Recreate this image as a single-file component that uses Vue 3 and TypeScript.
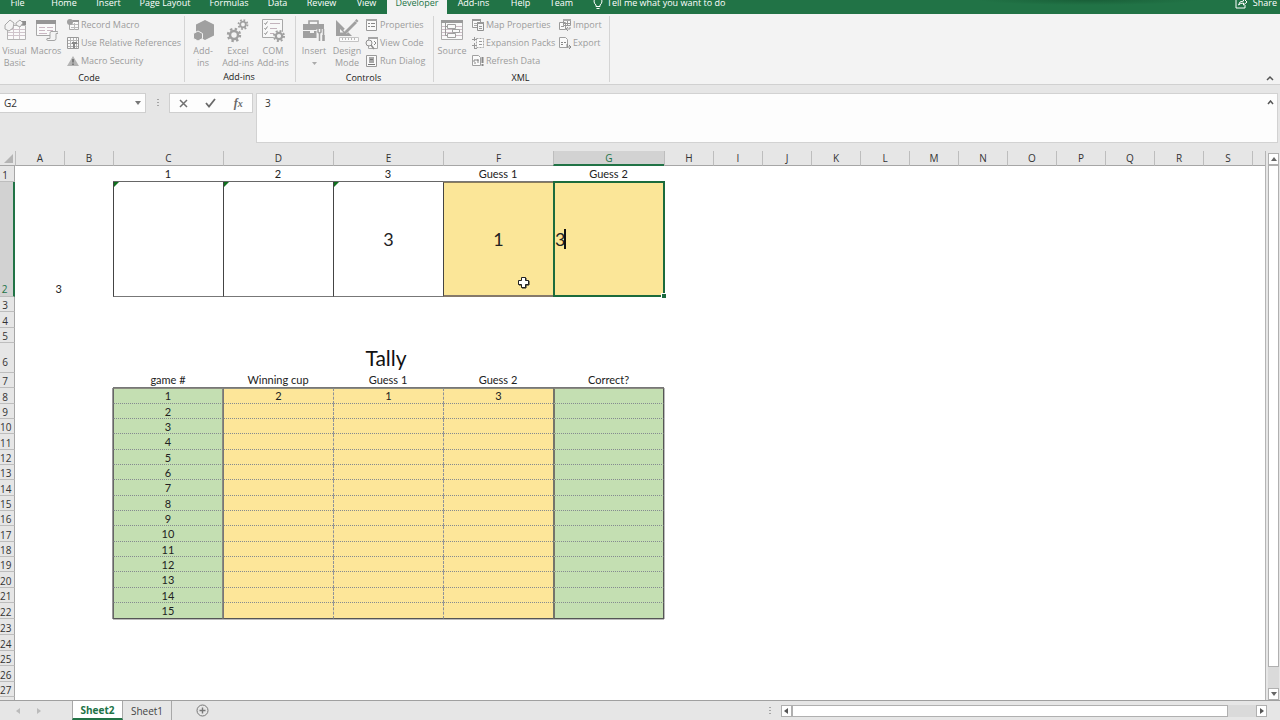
<script setup lang="ts">
import { ref } from 'vue'

interface Command { label: string; icon: string; menu?: boolean }
interface Group { name: string; cls: string; large: Command[]; small: Command[][] }

const tabs = ['File', 'Home', 'Insert', 'Page Layout', 'Formulas', 'Data', 'Review', 'View', 'Developer', 'Add-ins', 'Help', 'Team']

const icons: Record<string, string> = {
  vb: '<path d="M4.500 6.500h18v14h-18z" fill="#fafafa" stroke="#b4b4b4"/><path d="M18 2h5v4h-5z" fill="#8e8e8e"/><path d="M5 10.500h17M5 13.500h17M5 16.500h17M10.500 8v12M16.500 8v12" stroke="#cfc4cb" fill="none"/><path d="M2 6l5-5 4 3-1 5-4 3-4-2z M13 4l4-3 3 3-3 4-4-2z" fill="#f3f3f3" stroke="#a8a8a8"/>',
  macros: '<path d="M2.500 1.500h19v15h-19z" fill="#fafafa" stroke="#a8a8a8"/><path d="M2 1h20v4H2z" fill="#969696"/><path d="M5 8.500h6M13 8.500h6M5 11.500h6M13 11.500h6M5 14.500h8" stroke="#c9b7c2" fill="none"/><path d="M17 12.500h6q2 0 1 2h-2v5q0 2-2 2h-6q-2 0-1-2h3v-5q0-2 1-2z" fill="#f3f3f3" stroke="#a5a5a5"/>',
  hex: '<path d="M14 1l9 4.500v11L14 21l-9-4.500v-11z" fill="#a0a0a0"/><path d="M7 12l4.500 2.500v5L7 22l-4.500-2.500v-5z" fill="#a0a0a0" stroke="#f3f3f3"/>',
  gears: '<g fill="none" stroke="#a0a0a0"><circle cx="8" cy="16" r="4" stroke-width="2.500"/><circle cx="8" cy="16" r="6" stroke-width="2.400" stroke-dasharray="2.350 2.360"/><circle cx="17" cy="5.500" r="2.800" stroke-width="1.800"/><circle cx="17" cy="5.500" r="4.500" stroke-width="1.800" stroke-dasharray="1.760 1.770"/></g>',
  com: '<path d="M1.500 .500h20v18h-20z" fill="#f8f8f8" stroke="#a8a8a8"/><path d="M3.500 4l1 1.500 2-3M3.500 9l1 1.500 2-3M3.500 14l1 1.500 2-3" fill="none" stroke="#909090"/><path d="M9 4.500h10M9 9.500h7M9 14.500h4" stroke="#c3b3bc"/><circle cx="18" cy="17" r="5.500" fill="#f3f3f3"/><circle cx="18" cy="17" r="3.200" fill="#f3f3f3" stroke="#a0a0a0" stroke-width="2.200"/><circle cx="18" cy="17" r="5" fill="none" stroke="#a0a0a0" stroke-width="2" stroke-dasharray="1.960 1.970"/>',
  toolbox: '<path d="M1 5h21v6H1zM1 12h7v2h4v-2h4v7H1z" fill="#a0a0a0"/><path d="M7 5V2h9v3" fill="none" stroke="#a0a0a0" stroke-width="1.600"/><path d="M14.500 10h9v13h-9z" fill="#f3f3f3"/><path d="M17.500 14v8M16 10v3q1.500 2 3 0v-3M21.500 10v6" fill="none" stroke="#a0a0a0" stroke-width="1.500"/><path d="M21.500 16v6" stroke="#a0a0a0" stroke-width="2.600"/>',
  design: '<path d="M1 1v16h16z" fill="#a0a0a0"/><path d="M5 10v3.500h3.500z" fill="#f3f3f3"/><path d="M22 1L10 13" stroke="#f3f3f3" stroke-width="5"/><path d="M21 3L11 13" stroke="#a0a0a0" stroke-width="2.800"/><path d="M21.500 0l2 2-1.500 1.500-2-2zM9 15l1-3.500 2.500 2.500z" fill="#a0a0a0"/><path d="M4.500 18.500h19v4h-19z" fill="#fafafa" stroke="#c4c4c4"/><path d="M7.500 19v2M10.500 19v2M13.500 19v2M16.500 19v2M19.500 19v2" stroke="#bbb"/>',
  source: '<path d="M1.500 1.500h21v19h-21z" fill="#f9f9f9" stroke="#aaa"/><path d="M1 1h22v3H1z" fill="#9a9a9a"/><path d="M2 7.500h20M2 10.500h20M2 13.500h20M2 16.500h20" stroke="#ccbdc6"/><path d="M5.500 4v12.500H9M5.500 7.500H9M12.500 10v2h2" fill="none" stroke="#999"/><path d="M7.500 5.500h8v4h-8zM7.500 14.500h8v4h-8zM12.500 10.500h7v3h-7z" fill="#f9f9f9" stroke="#a0a0a0"/>',
  record: '<path d="M3.500 2.500h9v9h-9z" fill="#fafafa" stroke="#aaa"/><path d="M7 2h6v2H7z" fill="#999"/><path d="M5 6.500h7M5 9.500h7M8.500 5v7" stroke="#bbb"/><circle cx="4" cy="4" r="3" fill="#a0a0a0"/>',
  relative: '<path d="M1.500 1.500h11v11h-11z" fill="#fafafa" stroke="#999"/><path d="M2 4.500h10M2 7.500h10M2 10.500h10M4.500 2v10M7.500 2v10M10.500 2v10" stroke="#b5b5b5"/><path d="M6 6h5v2H9v4H7V8H6z" fill="#888"/>',
  security: '<path d="M7 2l6 10H1z" fill="#b4b4b4"/><path d="M7 5v3.500M7 9.500v1.500" stroke="#666" stroke-width="1.400"/>',
  properties: '<path d="M1.500 1.500h10v11h-10z" fill="#fafafa" stroke="#999"/><path d="M1 1h11v2H1z" fill="#a6a6a6"/><path d="M3 5.500h2M6 5.500h4M3 8.500h2M6 8.500h4" stroke="#888"/>',
  viewcode: '<path d="M3.500 1.500h9v11h-9z" fill="#fafafa" stroke="#a8a8a8"/><path d="M3 1h10v2H3z" fill="#a6a6a6"/><path d="M9 5l2 2-2 2" fill="none" stroke="#888"/><circle cx="4" cy="7" r="3" fill="#f3f3f3" stroke="#8f8f8f"/><path d="M6 9l3 4" stroke="#8f8f8f" stroke-width="1.500"/>',
  dialog: '<path d="M1.500 1.500h10v11h-10z" fill="#fafafa" stroke="#999"/><path d="M4 3h5v6H4z" fill="#a8a8a8"/><path d="M5 5.500h3M3 10.500h7" stroke="#777"/>',
  map: '<path d="M1.500 1.500h8v8h-8z" fill="#fafafa" stroke="#999"/><path d="M1 1h9v2H1z" fill="#999"/><path d="M3 5.500h3M3 7.500h3" stroke="#aaa"/><path d="M6.500 4.500h6v8h-6z" fill="#f6f6f6" stroke="#8f8f8f"/><path d="M6 4h7v2H6z" fill="#999"/><path d="M8 8.500h3M8 10.500h3" stroke="#999"/>',
  expansion: '<path d="M5.500 2.500h7v9h-7z" fill="#fafafa" stroke="#a5a5a5" stroke-dasharray="2 1"/><path d="M8 5.500h3M8 8.500h3M3.500 1v4M1 3.500h5M3.500 7v5M1 9.500h5M3 12.500h3" stroke="#999"/>',
  refresh: '<path d="M1.500 1.500h6l2 2v8h-8z" fill="#fafafa" stroke="#a0a0a0"/><path d="M3 8V6h4v3M7 5v2M4 10V8" fill="none" stroke="#888"/><path d="M11.500 3v6M11.500 10v2" stroke="#888" stroke-width="2"/>',
  import: '<path d="M5.500 1.500h7v6h-7zM1.500 4.500h6v7h-6z" fill="#fafafa" stroke="#999"/><path d="M5 1h8v2H5z" fill="#aaa"/><path d="M3 8.500h3M9.500 3v5M6 5.500h6M12 9v2H8M10 9l-2 2 2 2" fill="none" stroke="#999"/>',
  export: '<path d="M1.500 1.500h6l2 2v8h-8z" fill="#fafafa" stroke="#a0a0a0"/><path d="M3 6.500h2M6 6.500h2M3 8.500h2M9 8v3h4M11 9l2 2-2 2" fill="none" stroke="#888"/>',
}

const groups: Group[] = [
  {
    name: 'Code', cls: 'g-code',
    large: [{ label: 'Visual\nBasic', icon: 'vb' }, { label: 'Macros', icon: 'macros' }],
    small: [[{ label: 'Record Macro', icon: 'record' }, { label: 'Use Relative References', icon: 'relative' }, { label: 'Macro Security', icon: 'security' }]],
  },
  {
    name: 'Add-ins', cls: 'g-addins',
    large: [{ label: 'Add-\nins', icon: 'hex' }, { label: 'Excel\nAdd-ins', icon: 'gears' }, { label: 'COM\nAdd-ins', icon: 'com' }],
    small: [],
  },
  {
    name: 'Controls', cls: 'g-controls',
    large: [{ label: 'Insert', icon: 'toolbox', menu: true }, { label: 'Design\nMode', icon: 'design' }],
    small: [[{ label: 'Properties', icon: 'properties' }, { label: 'View Code', icon: 'viewcode' }, { label: 'Run Dialog', icon: 'dialog' }]],
  },
  {
    name: 'XML', cls: 'g-xml',
    large: [{ label: 'Source', icon: 'source' }],
    small: [
      [{ label: 'Map Properties', icon: 'map' }, { label: 'Expansion Packs', icon: 'expansion' }, { label: 'Refresh Data', icon: 'refresh' }],
      [{ label: 'Import', icon: 'import' }, { label: 'Export', icon: 'export' }],
    ],
  },
]

const letters = 'ABCDEFGHIJKLMNOPQRS'.split('')
const wide: Record<string, number> = { C: 110, D: 110, E: 110, F: 110, G: 111 }
const columns = letters.map((name) => ({ name, width: wide[name] ?? 49 }))

const heights = [16, 115, 15, 16, 15, 30, 15, 16, 15, 15, 16, 15, 15, 16, 15, 15, 16, 15, 15, 16, 15, 16, 16, 16, 15, 16, 15, 16]
const rows = heights.map((height, i) => ({ n: i + 1, height }))

const cells: Record<string, string> = {
  C1: '1', D1: '2', E1: '3', F1: 'Guess 1', G1: 'Guess 2',
  A2: '3', E2: '3', F2: '1',
  E6: 'Tally',
  C7: 'game #', D7: 'Winning cup', E7: 'Guess 1', F7: 'Guess 2', G7: 'Correct?',
  D8: '2', E8: '1', F8: '3',
}
for (let i = 1; i <= 15; i++) cells[`C${i + 7}`] = String(i)

function cellClass(col: string, row: number): string[] {
  const out: string[] = []
  const inTable = 'CDEFG'.includes(col)
  if (row === 2) {
    out.push('tall')
    if ('CDE'.includes(col)) out.push('cup', 'flag')
    if (col === 'F') out.push('guess')
    if (col === 'G') out.push('active')
    if (col === 'A') out.push('low')
  }
  if (row === 6) out.push('title')
  if (row === 7 && inTable) out.push('above')
  if (row >= 8 && row <= 22 && inTable) {
    out.push('tally', 'CG'.includes(col) ? 'green' : 'yellow', `t-${col}`)
    if (row === 8) out.push('first')
    if (row === 22) out.push('last')
  }
  if (row === 23 && inTable) out.push('below')
  return out
}

const entry = ref('3')
const nameBox = ref('G2')
</script>

<template>
  <div class="excel">
    <nav class="tabs" aria-label="Ribbon tabs">
      <button v-for="t in tabs" :key="t" type="button" :class="{ on: t === 'Developer' }">{{ t }}</button>
      <button type="button" class="tell">
        <svg width="10" height="13" viewBox="0 0 10 13" aria-hidden="true"><path d="M3 9.500V8Q1 6.500 1 4a4 4 0 0 1 8 0q0 2.500-2 4v1.500zM3.500 11.500h3" fill="none" stroke="#fff" /></svg>
        <span>Tell me what you want to do</span>
      </button>
      <button type="button" class="share">
        <svg width="13" height="12" viewBox="0 0 13 12" aria-hidden="true"><path d="M5 2H1v9h9V8M3.500 8q.500-4 5-4V1.500L12 5 8.500 8V6q-3 0-5 2z" fill="none" stroke="#fff" /></svg>
        <span>Share</span>
      </button>
    </nav>

    <div class="ribbon">
      <section v-for="g in groups" :key="g.name" class="group" :class="g.cls">
        <div class="commands">
          <button v-for="c in g.large" :key="c.label" type="button" class="large">
            <svg width="24" height="24" viewBox="0 0 24 24" aria-hidden="true" v-html="icons[c.icon]"></svg>
            <span>{{ c.label }}</span>
            <svg v-if="c.menu" class="drop" width="5" height="3" viewBox="0 0 5 3" aria-hidden="true"><path d="M0 0h5L2.500 3z" fill="#aaa" /></svg>
          </button>
          <div v-for="(list, i) in g.small" :key="i" class="stack">
            <button v-for="c in list" :key="c.label" type="button" class="small">
              <svg width="14" height="14" viewBox="0 0 14 14" aria-hidden="true" v-html="icons[c.icon]"></svg>
              <span>{{ c.label }}</span>
            </button>
          </div>
        </div>
        <h2>{{ g.name }}</h2>
      </section>
      <button type="button" class="collapse" aria-label="Collapse ribbon">
        <svg width="8" height="6" viewBox="0 0 8 6" aria-hidden="true"><path d="M1 5l3-3 3 3" fill="none" stroke="#555" stroke-width="1.500" /></svg>
      </button>
    </div>

    <div class="formula">
      <div class="namebox">
        <input v-model="nameBox" type="text" aria-label="Name box" />
        <button type="button" aria-label="Named ranges"><svg width="6" height="4" viewBox="0 0 6 4" aria-hidden="true"><path d="M0 0h6L3 4z" fill="#777" /></svg></button>
      </div>
      <span class="dots"></span>
      <div class="actions">
        <button type="button" aria-label="Cancel"><svg width="9" height="9" viewBox="0 0 9 9" aria-hidden="true"><path d="M1 1l7 7M8 1L1 8" stroke="#707070" stroke-width="1.500" /></svg></button>
        <button type="button" aria-label="Enter"><svg width="11" height="10" viewBox="0 0 11 10" aria-hidden="true"><path d="M1 5l3 3.500L10 1" fill="none" stroke="#6a6a6a" stroke-width="1.800" /></svg></button>
        <button type="button" class="fx" aria-label="Insert function">f<small>x</small></button>
      </div>
      <div class="entry">
        <textarea v-model="entry" aria-label="Formula bar"></textarea>
        <button type="button" aria-label="Collapse formula bar"><svg width="7" height="5" viewBox="0 0 7 5" aria-hidden="true"><path d="M1 4l2.500-3L6 4" fill="none" stroke="#555" stroke-width="1.500" /></svg></button>
      </div>
    </div>

    <main class="body">
      <div class="sheet">
        <table>
          <colgroup>
            <col class="rowcol" />
            <col v-for="c in columns" :key="c.name" :style="{ width: c.width + 'px' }" />
            <col />
          </colgroup>
          <thead>
            <tr>
              <th class="corner"><svg width="9" height="9" viewBox="0 0 9 9" aria-hidden="true"><path d="M9 0v9H0z" fill="#b4b4b4" /></svg></th>
              <th v-for="c in columns" :key="c.name" scope="col" :class="{ picked: c.name === 'G' }">{{ c.name }}</th>
              <th></th>
            </tr>
          </thead>
          <tbody>
            <tr v-for="r in rows" :key="r.n" :style="{ height: r.height + 'px' }">
              <th scope="row" :class="{ picked: r.n === 2, roomy: r.n === 6 }">{{ r.n }}</th>
              <td v-for="c in columns" :key="c.name" :class="cellClass(c.name, r.n)">
                <template v-if="c.name === 'G' && r.n === 2">
                  <div class="selection">
                    <input v-model="entry" type="text" aria-label="Cell G2" /><i class="caret"></i>
                    <i class="handle"></i>
                  </div>
                </template>
                <template v-else>{{ cells[c.name + r.n] }}</template>
                <svg v-if="c.name === 'F' && r.n === 2" class="pointer" width="13" height="13" viewBox="0 0 13 13" aria-hidden="true">
                  <path d="M5 2h4v3h3v4H9v3H5V9H2V5h3z" fill="#222" stroke="#222" />
                  <path d="M4.500 1.500h4v3h3v4h-3v3h-4v-3h-3v-4h3z" fill="#fff" stroke="#222" />
                </svg>
              </td>
              <td></td>
            </tr>
          </tbody>
        </table>
      </div>
      <div class="vscroll">
        <button type="button" aria-label="Scroll up"><svg width="6" height="4" viewBox="0 0 6 4" aria-hidden="true"><path d="M0 4h6L3 0z" fill="#666" /></svg></button>
        <div class="track"><div class="thumb"></div></div>
        <button type="button" aria-label="Scroll down"><svg width="6" height="4" viewBox="0 0 6 4" aria-hidden="true"><path d="M0 0h6L3 4z" fill="#666" /></svg></button>
      </div>
    </main>

    <footer class="bottom">
      <div class="steps">
        <button type="button" aria-label="Previous sheet"><svg width="4" height="6" viewBox="0 0 4 6" aria-hidden="true"><path d="M4 0v6L0 3z" fill="#bbb" /></svg></button>
        <button type="button" aria-label="Next sheet"><svg width="4" height="6" viewBox="0 0 4 6" aria-hidden="true"><path d="M0 0v6l4-3z" fill="#bbb" /></svg></button>
      </div>
      <button type="button" class="tab current">Sheet2</button>
      <button type="button" class="tab">Sheet1</button>
      <button type="button" class="add" aria-label="New sheet">
        <svg width="13" height="13" viewBox="0 0 13 13" aria-hidden="true"><circle cx="6.500" cy="6.500" r="5.500" fill="none" stroke="#777" /><path d="M6.500 3.500v6M3.500 6.500h6" stroke="#777" stroke-width="1.400" /></svg>
      </button>
      <span class="dots short"></span>
      <div class="hscroll">
        <button type="button" aria-label="Scroll left"><svg width="4" height="6" viewBox="0 0 4 6" aria-hidden="true"><path d="M4 0v6L0 3z" fill="#555" /></svg></button>
        <div class="track"><div class="thumb"></div></div>
        <button type="button" aria-label="Scroll right"><svg width="4" height="6" viewBox="0 0 4 6" aria-hidden="true"><path d="M0 0v6l4-3z" fill="#555" /></svg></button>
      </div>
    </footer>
  </div>
</template>

<style>
body { margin: 0; overflow: hidden; }
</style>

<style scoped>
.excel {
  display: flex;
  flex-direction: column;
  height: 100vh;
  overflow: hidden;
  background: #e6e6e6;
  font-family: "Open Sans", "Noto Sans", sans-serif;
  font-size: 10px;
  color: #333;
}
.excel * { box-sizing: border-box; }
button, input, textarea {
  margin: 0;
  padding: 0;
  border: 0;
  border-radius: 0;
  background: none;
  font: inherit;
  color: inherit;
  outline: none;
}
svg { display: block; flex: none; }

.tabs {
  display: grid;
  grid-template-columns: 41px 46px 43px 70px 58px 39px 49px 41px 60px 53px 41px 41px 150px 1fr;
  flex: none;
  height: 14px;
  background: radial-gradient(ellipse 110px 5px at 85% 0, #195f38, #217346) #217346;
  color: #fff;
  font-size: 9px;
}
.tabs button {
  display: flex;
  justify-content: center;
  align-items: center;
  height: 14px;
  padding-bottom: 8px;
  line-height: 6px;
  white-space: nowrap;
}
.tabs button:first-child { padding-right: 6px; }
.tabs .on { background: #f3f3f3; color: #217346; }
.tabs .tell { justify-content: flex-start; gap: 4px; padding-left: 11px; }
.tabs .share { justify-self: end; gap: 5px; padding-right: 3px; }

.ribbon {
  display: flex;
  flex: none;
  height: 71px;
  padding-top: 2px;
  background: #f3f3f3;
  border-bottom: 1px solid #d0d0d0;
  color: #9c9c9c;
  font-size: 9px;
}
.group {
  display: flex;
  flex-direction: column;
  height: 66px;
  border-right: 1px solid #d4d4d4;
}
.g-code { width: 185px; }
.g-addins { width: 111px; }
.g-controls { width: 138px; }
.g-xml { width: 176px; }
.commands { display: flex; height: 56px; }
.group h2 {
  margin: 0;
  padding: 2px 6px 0 0;
  font-size: 9px;
  font-weight: 400;
  line-height: 12px;
  text-align: center;
  color: #222;
}
.g-addins h2, .g-controls h2, .g-xml h2 { padding-right: 2px; }
.large {
  display: flex;
  flex: none;
  flex-direction: column;
  align-items: center;
  width: 36px;
  padding-top: 3px;
  line-height: 12px;
}
.large span { margin-top: 2px; text-align: center; white-space: pre; }
.g-code .large:first-child { width: 29px; }
.g-addins .large:nth-child(2) { width: 34px; }
.g-code .large:nth-child(2) { width: 34px; }
.g-controls .large:nth-child(2) { width: 30px; }
.large .drop { margin-top: 5px; }
.stack { display: flex; flex: none; flex-direction: column; }
.g-code .stack, .g-controls .stack { margin-left: 3px; }
.g-xml .stack { margin-left: 1px; width: 86px; }
.g-xml .stack + .stack { width: 48px; }
.small {
  display: flex;
  align-items: center;
  gap: 1px;
  height: 18px;
  line-height: 18px;
  white-space: nowrap;
}
.collapse { align-self: flex-end; margin-left: auto; padding: 0 6px 3px 0; }

.formula {
  display: flex;
  align-items: flex-start;
  flex: none;
  height: 66px;
  padding: 8px 2px 0 0;
}
.namebox, .actions {
  display: flex;
  align-items: center;
  height: 20px;
  background: #fdfdfd;
  border: 1px solid #cfcfcf;
}
.namebox { width: 146px; border-left: 0; }
.namebox input { flex: 1; min-width: 0; padding-left: 4px; }
.namebox button { padding: 0 4px; }
.dots {
  width: 2px;
  height: 8px;
  margin: 6px 10px 0 11px;
  background: repeating-linear-gradient(#a5a5a5 0 1px, transparent 1px 3px);
}
.actions { width: 84px; }
.actions button { display: flex; flex: 1; justify-content: center; align-items: center; }
.actions .fx { font: italic 700 12px/16px "Liberation Serif", serif; color: #6a6a6a; }
.fx small { font-size: 10px; padding-top: 1px; }
.entry {
  display: flex;
  flex: 1;
  align-items: flex-start;
  height: 50px;
  margin-left: 3px;
  background: #fdfdfd;
  border: 1px solid #d2d2d2;
}
.entry textarea { flex: 1; height: 48px; padding: 2px 8px; line-height: 14px; resize: none; overflow: hidden; }
.entry button { padding: 6px 3px; }

.body { display: flex; flex: 1; min-height: 0; }
.sheet { flex: 1; min-width: 0; overflow: hidden; background: #fff; border-right: 1px solid #b5b5b5; }
table {
  width: 100%;
  table-layout: fixed;
  border-collapse: separate;
  border-spacing: 0;
  font-family: Lato, "Open Sans", sans-serif;
  font-size: 11px;
  line-height: 12px;
  color: #222;
}
.rowcol { width: 15px; }
th, td { padding: 0; text-align: center; white-space: nowrap; }
th {
  background: #e6e6e6;
  font-family: "Open Sans", "Noto Sans", sans-serif;
  font-size: 10px;
  font-weight: 400;
  color: #333;
}
thead th { height: 15px; border-left: 1px solid #bdbdbd; border-bottom: 1px solid #a6a6a6; }
thead .picked { background: #d2d2d2; color: #217346; border-bottom: 2px solid #217346; }
thead .corner { border-left: 0; }
.corner svg { margin-left: 4px; }
tbody th {
  padding-right: 4px;
  border-right: 1px solid #a6a6a6;
  border-bottom: 1px solid #bdbdbd;
  vertical-align: bottom;
}
tbody .picked { padding-bottom: 1px; background: #d2d2d2; color: #217346; border-right: 2px solid #217346; }
tbody .roomy { padding-bottom: 4px; }
.tall { position: relative; font-size: 18px; }
.low { font-size: 11px; text-align: right; vertical-align: bottom; padding: 0 2px 2px 0; }
.title { padding-right: 4px; font-size: 21px; color: #111; }
.cup {
  border-left: 1px solid #444;
  border-bottom: 1px solid #777;
  box-shadow: 0 -1px #666;
}
.flag::before {
  content: "";
  position: absolute;
  left: 0;
  top: 0;
  border-top: 5px solid #10701f;
  border-right: 5px solid transparent;
}
.guess {
  background: #fbe698;
  border-left: 1px solid #444;
  border-top: 1px solid #8a7d5c;
  border-bottom: 2px solid #85796a;
  box-shadow: 0 -1px #777;
}
.active { background: #fbe698; }
.selection {
  position: absolute;
  inset: -1px -1px 0 0;
  display: flex;
  align-items: center;
  border: 2px solid #1b6b3c;
}
.selection input { width: 9px; height: 24px; overflow: visible; }
.caret { width: 2px; height: 20px; background: #111; }
.handle {
  position: absolute;
  right: -3px;
  bottom: -3px;
  width: 5px;
  height: 5px;
  background: #1b6b3c;
  border: solid #fff;
  border-width: 1px 0 0 1px;
}
.pointer { position: absolute; left: 73px; top: 93px; }
.above { border-bottom: 1px solid #777; }
.tally { padding-top: 1px; border-bottom: 1px dotted #858a90; }
.first { padding-top: 0; border-top: 1px solid #8a8a80; }
.green { background: #c4dfb2; }
.yellow { background: #fde699; }
.t-C { border-left: 1px solid #666; border-right: 1px solid #8a8a80; box-shadow: -1px 0 #999; }
.t-D { border-left: 1px solid #777; }
.t-E, .t-F { border-left: 1px dashed #8e9299; }
.t-G { border-left: 2px solid #74746a; border-right: 1px solid #555; box-shadow: 1px 0 #bbb; }
.last { border-bottom: 1px solid #555; }
.below { border-top: 1px solid #bbb; }

.vscroll {
  display: flex;
  flex-direction: column;
  flex: none;
  width: 14px;
  padding: 2px 1px 0 2px;
}
.vscroll button, .hscroll button {
  display: flex;
  justify-content: center;
  align-items: center;
  flex: none;
  width: 11px;
  height: 12px;
  background: #fff;
  border: 1px solid #b0b0b0;
}
.track { display: flex; flex: 1; background: #dadada; }
.thumb { background: #fff; border: 1px solid #b0b0b0; }
.vscroll .track { flex-direction: column; }
.vscroll .thumb { height: 96%; }

.bottom {
  display: flex;
  align-items: stretch;
  flex: none;
  height: 20px;
  border-top: 1px solid #a0a0a0;
}
.steps { display: flex; align-items: center; gap: 17px; width: 72px; padding-left: 16px; }
.tab { width: 49px; line-height: 16px; color: #444; border-right: 1px solid #a8a8a8; }
.tab.current {
  width: 51px;
  background: #fff;
  border-bottom: 2px solid #217346;
  border-left: 1px solid #a8a8a8;
  font-weight: 700;
  color: #217346;
}
.add { display: flex; align-items: center; margin-left: 24px; }
.dots.short { margin-left: auto; }
.hscroll { display: flex; flex: 0 0 38%; align-items: center; margin-right: 13px; }
.hscroll .track { height: 12px; }
.hscroll .thumb { width: 94%; }
</style>
